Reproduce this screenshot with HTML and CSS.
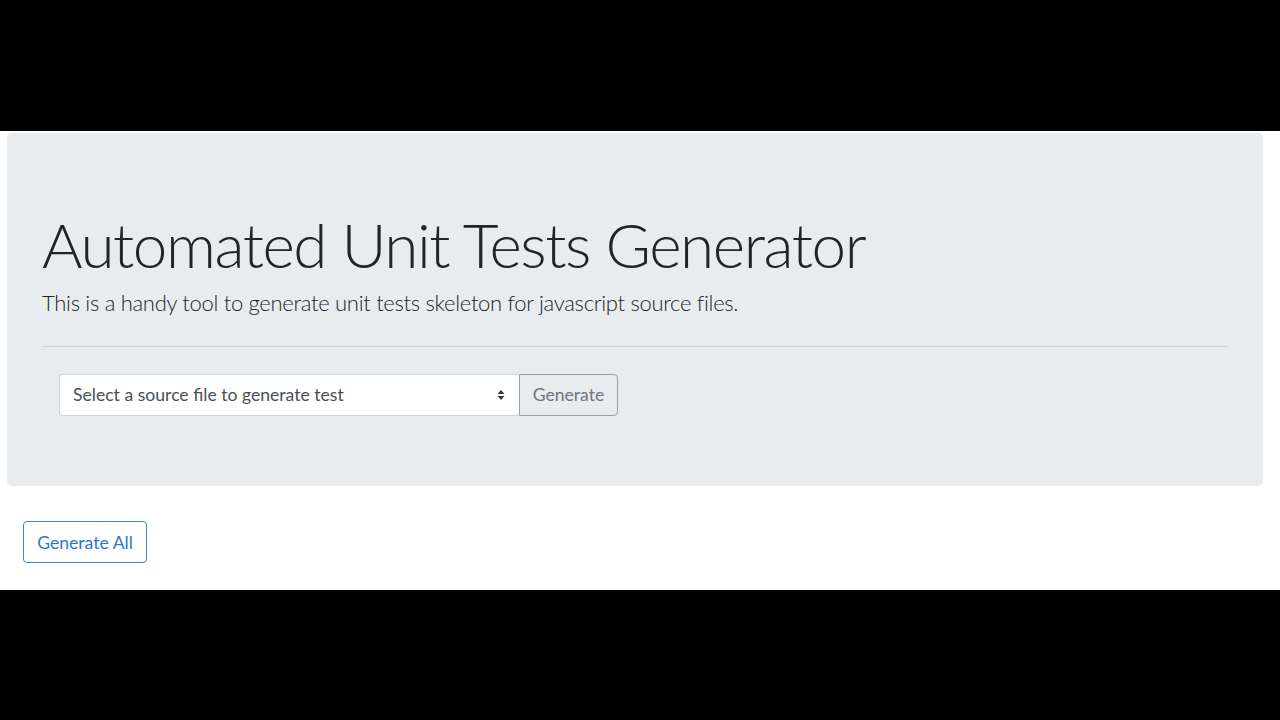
FILE: index.html
```html
<!DOCTYPE html>
<html lang="en">
<head>
<meta charset="utf-8">
<title>Automated Unit Tests Generator</title>
<link rel="stylesheet" href="styles.css">
</head>
<body>
<div class="letterbox"></div>
<div class="page">
  <div class="jumbotron">
    <h1 class="display">Automated Unit Tests Generator</h1>
    <p class="lead">This is a handy tool to generate unit tests skeleton for javascript source files.</p>
    <hr class="divider">
    <form class="gen-form">
      <div class="input-group">
        <div class="select">
          <span class="select-text">Select a source file to generate test</span>
          <svg class="select-arrow" width="8" height="12" viewBox="0 0 8 12"><path d="M4 1 L7.5 5 H0.5 Z M4 11 L0.5 7 H7.5 Z" fill="#343a40"/></svg>
        </div>
        <button type="button" class="btn btn-disabled">Generate</button>
      </div>
    </form>
  </div>
  <button type="button" class="btn btn-outline-primary">Generate All</button>
</div>
<div class="letterbox bottom"></div>
</body>
</html>
```

FILE: styles.css
```css
html { font-size: 17.6px; }
body {
  margin: 0;
  background: #000;
  font-family: "Lato", "Open Sans", "Liberation Sans", sans-serif;
  color: #212529;
}
.letterbox { height: 131px; background: #000; }
.letterbox.bottom { height: 130px; }
.page {
  background: #fff;
  height: 459px;
  padding: 2px 17px 0 7px;
  box-sizing: border-box;
}
.jumbotron {
  background: #e9ecef;
  border-radius: 5px;
  padding: 70px 35px 70px 35px;
  margin-bottom: 35px;
}
.display {
  margin: 0 0 5px 0;
  padding-top: 4px;
  font-size: 62px;
  font-weight: 300;
  line-height: 1.2;
  letter-spacing: -1.42px;
}
.lead {
  margin: 0 0 17.6px 0;
  font-size: 22px;
  font-weight: 300;
  line-height: 1.5;
  letter-spacing: -0.3px;
}
.divider {
  margin: 26.4px 0 27px 0;
  border: 0;
  border-top: 1px solid rgba(0,0,0,0.1);
}
.gen-form { margin: 0; padding-left: 17px; }
.input-group { display: flex; }
.select {
  width: 460px;
  height: 42px;
  box-sizing: border-box;
  background: #fff;
  border: 1px solid #ced4da;
  border-right: 0;
  border-radius: 4px 0 0 4px;
  display: flex;
  align-items: center;
  justify-content: space-between;
  padding: 0 14px 0 13px;
  color: #495057;
  font-size: 17.6px;
}
.btn {
  font-family: inherit;
  font-size: 17.6px;
  line-height: 1.5;
  height: 42px;
  box-sizing: border-box;
  padding: 1px 12px 0;
  background: transparent;
  border-radius: 4px;
  white-space: nowrap;
  cursor: pointer;
}
.btn-disabled {
  color: #6c757d;
  border: 1px solid #9ca2a8;
  border-radius: 0 4px 4px 0;
  width: 99px;
}
.btn-outline-primary {
  margin-left: 16px;
  padding-top: 3px;
  color: #2a78d2;
  border: 1px solid #3d86d8;
  width: 124px;
}
```
